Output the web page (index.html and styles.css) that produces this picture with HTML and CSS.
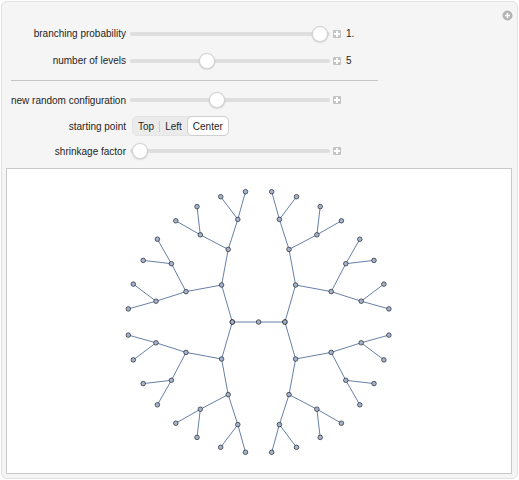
FILE: index.html
```html
<!DOCTYPE html>
<html>
<head>
<meta charset="utf-8">
<link rel="stylesheet" href="styles.css">
</head>
<body>
<div class="panel">
  <svg class="add-icon" width="11" height="11" viewBox="0 0 11 11"><circle cx="5.5" cy="5.5" r="5" fill="#b5b5b5"/><path d="M5.5 3v5M3 5.5h5" stroke="#fff" stroke-width="1.6"/></svg>
  <div class="controls">
    <div class="row">
      <span class="label">branching probability</span>
      <div class="slider"><div class="track"></div><span class="thumb" style="left: 182px"></span></div>
      <span class="plus"></span><span class="value">1.</span>
    </div>
    <div class="row">
      <span class="label">number of levels</span>
      <div class="slider"><div class="track"></div><span class="thumb" style="left: 69px"></span></div>
      <span class="plus"></span><span class="value">5</span>
    </div>
    <div class="sep"></div>
    <div class="row">
      <span class="label">new random configuration</span>
      <div class="slider"><div class="track"></div><span class="thumb" style="left: 79px"></span></div>
      <span class="plus"></span>
    </div>
    <div class="row">
      <span class="label">starting point</span>
      <div class="seg"><span class="opt">Top</span><span class="bar"></span><span class="opt">Left</span><span class="opt on">Center</span></div>
    </div>
    <div class="row row-last">
      <span class="label">shrinkage factor</span>
      <div class="slider"><div class="track"></div><span class="thumb" style="left: 2px"></span></div>
      <span class="plus"></span>
    </div>
  </div>
  <div class="plot">
    <svg width="504" height="304" viewBox="7 169 504 304">
      <defs>
        <path id="qe" d="M-26.3 0L-37 -37L-30.4 -72.6L-20.8 -102.6L-13.1 -130.3M-20.8 -102.6L-37.9 -125.3M-30.4 -72.6L-58.3 -87.2L-61.6 -115.4M-58.3 -87.2L-82.8 -101.2M-37 -37L-72.6 -30.4L-87.2 -58.3L-101.2 -82.8M-87.2 -58.3L-115.4 -61.6M-72.6 -30.4L-102.6 -20.8L-125.3 -37.9M-102.6 -20.8L-130.3 -13.1"/>
        <g id="qn">
          <circle cx="-26.3" cy="0" r="2.3"/>
          <circle cx="-37" cy="-37" r="2.3"/>
          <circle cx="-30.4" cy="-72.6" r="2.3"/>
          <circle cx="-20.8" cy="-102.6" r="2.3"/>
          <circle cx="-13.1" cy="-130.3" r="2.3"/>
          <circle cx="-37.9" cy="-125.3" r="2.3"/>
          <circle cx="-58.3" cy="-87.2" r="2.3"/>
          <circle cx="-61.6" cy="-115.4" r="2.3"/>
          <circle cx="-82.8" cy="-101.2" r="2.3"/>
          <circle cx="-72.6" cy="-30.4" r="2.3"/>
          <circle cx="-87.2" cy="-58.3" r="2.3"/>
          <circle cx="-101.2" cy="-82.8" r="2.3"/>
          <circle cx="-115.4" cy="-61.6" r="2.3"/>
          <circle cx="-102.6" cy="-20.8" r="2.3"/>
          <circle cx="-125.3" cy="-37.9" r="2.3"/>
          <circle cx="-130.3" cy="-13.1" r="2.3"/>
        </g>
      </defs>
      <g transform="translate(258.6 322)">
        <g class="edges">
          <use href="#qe"/>
          <use href="#qe" transform="scale(-1 1)"/>
          <use href="#qe" transform="scale(1 -1)"/>
          <use href="#qe" transform="scale(-1 -1)"/>
          <path d="M-26.3 0H26.3"/>
        </g>
        <g class="nodes">
          <use href="#qn"/>
          <use href="#qn" transform="scale(-1 1)"/>
          <use href="#qn" transform="scale(1 -1)"/>
          <use href="#qn" transform="scale(-1 -1)"/>
          <circle cx="0" cy="0" r="2.3"/>
        </g>
      </g>
    </svg>
  </div>
</div>
</body>
</html>
```
FILE: styles.css
```css
html, body {
  margin: 0;
  padding: 0;
  background: #ffffff;
}
body {
  font-family: "Liberation Sans", Arial, sans-serif;
  font-size: 10px;
  color: #1e1e1e;
}
.panel {
  position: relative;
  margin: 1px 0 0 1px;
  width: 517px;
  height: 478px;
  box-sizing: border-box;
  border: 1px solid #e1e1e1;
  border-radius: 6px;
  background: #f5f5f5;
}
.add-icon {
  position: absolute;
  left: 500px;
  top: 8px;
}
.controls {
  display: flex;
  flex-direction: column;
  padding-top: 18px;
}
.row {
  display: grid;
  grid-template-columns: 124px 200px auto auto;
  justify-content: start;
  column-gap: 4px;
  align-items: center;
  height: 26px;
}
.row:first-child,
.row:nth-child(2) {
  height: 27px;
}
.row-last {
  height: 24px;
}
.label {
  text-align: right;
  white-space: nowrap;
}
.slider {
  position: relative;
  height: 16px;
  display: flex;
  align-items: center;
}
.track {
  width: 100%;
  height: 4px;
  border-radius: 2px;
  background: #dedede;
}
.thumb {
  position: absolute;
  top: 0;
  width: 16px;
  height: 16px;
  box-sizing: border-box;
  border-radius: 50%;
  background: #fff;
  border: 0.5px solid #d4d4d4;
  box-shadow: 0 0.5px 1.5px rgba(0, 0, 0, 0.2);
}
.plus {
  position: relative;
  width: 8px;
  height: 8px;
  margin-left: -1px;
  border-radius: 1px;
  background: #c4c4c4;
}
.plus::before,
.plus::after {
  content: "";
  position: absolute;
  background: #fff;
}
.plus::before {
  left: 1px;
  top: 3px;
  width: 6px;
  height: 2px;
}
.plus::after {
  left: 3px;
  top: 1px;
  width: 2px;
  height: 6px;
}
.value {
  margin-left: 1px;
  font-size: 10px;
}
.sep {
  margin: 6px 0 6px 9px;
  width: 367px;
  height: 1px;
  background: #c6c6c6;
}
.seg {
  justify-self: start;
  margin-left: 2px;
  display: flex;
  align-items: center;
  height: 20px;
  box-sizing: border-box;
  border-radius: 5px;
  background: #ebebeb;
  border: 1px solid #e4e4e4;
}
.opt {
  display: flex;
  align-items: center;
  justify-content: center;
  height: 100%;
  padding: 0 5px;
  box-sizing: border-box;
}
.opt.on {
  background: #fff;
  border: 1px solid #cfcfcf;
  border-radius: 5px;
  height: 20px;
  margin: -1px -1px -1px 0;
  padding: 0 5px;
}
.bar {
  width: 1px;
  height: 11px;
  background: #cdcdcd;
}
.plot {
  margin: 5px 0 0 4px;
  width: 506px;
  height: 306px;
  box-sizing: border-box;
  border: 1px solid #c9c9c9;
  background: #fff;
}
.plot svg {
  display: block;
}
.edges {
  fill: none;
  stroke: #264a80;
  stroke-opacity: 0.7;
  stroke-width: 1;
}
.nodes {
  fill: #a3b3cc;
  stroke: #000;
  stroke-opacity: 0.7;
  stroke-width: 0.8;
}
```
